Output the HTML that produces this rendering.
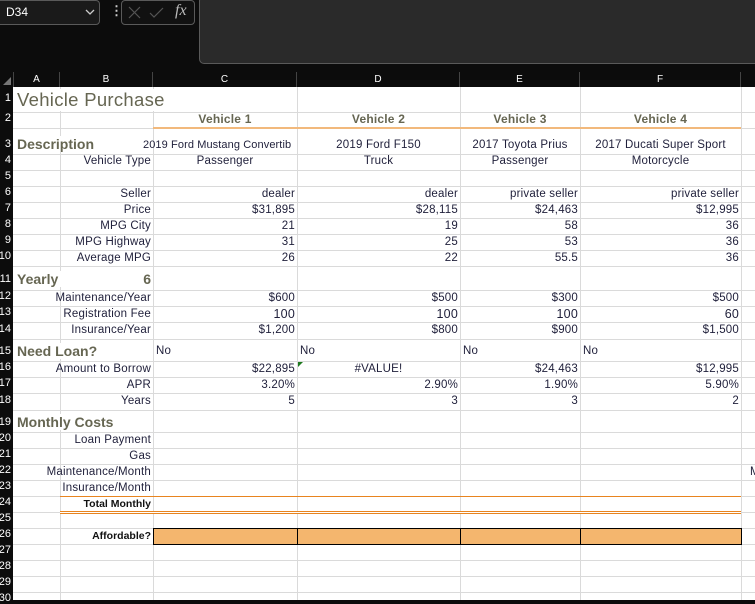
<!DOCTYPE html>
<html><head><meta charset="utf-8"><style>
*{margin:0;padding:0;box-sizing:border-box}
body{width:755px;height:600px;overflow:hidden;background:#0c0c0c;position:relative;font-family:"Liberation Sans",sans-serif}
.a{position:absolute}
.g{position:absolute;background:#dadada}
.t{position:absolute;font-size:11.5px;letter-spacing:0.2px;white-space:nowrap;color:#1f1f3a;height:16px;line-height:16px}
.r{text-align:right}
.c{text-align:center}
.h{font-weight:bold;font-size:14px;letter-spacing:0;color:#666652;background:#fff}
.rh{position:absolute;left:0;width:11px;overflow:hidden;color:#fff;font-size:11px;text-align:right;direction:rtl;white-space:nowrap}
.ch{position:absolute;top:72px;height:15px;line-height:15px;color:#fff;font-size:10px;text-align:center;border-right:1px solid #444}
</style></head><body>
<div class="a" style="left:-4px;top:0;width:104px;height:25px;border:1px solid #5a5a5a;border-radius:4px;background:#1a1a1a"></div>
<div class="a" style="left:6px;top:5px;color:#fff;font-size:12px">D34</div>
<svg class="a" style="left:85px;top:9px" width="10" height="7"><path d="M1 1 L5 5 L9 1" stroke="#ccc" stroke-width="1.3" fill="none"/></svg>
<div class="a" style="left:110px;top:3px;color:#ccc;font-size:13px;font-weight:bold">&#8942;</div>
<div class="a" style="left:121px;top:0;width:74px;height:25px;border:1px solid #5a5a5a;border-radius:4px;background:#111"></div>
<svg class="a" style="left:128px;top:6px" width="60" height="14"><path d="M1 1 L12 12 M12 1 L1 12" stroke="#555" stroke-width="1.2"/><path d="M22 7 L26 11 L35 2" stroke="#555" stroke-width="1.2" fill="none"/></svg>
<div class="a" style="left:175px;top:2px;color:#bbb;font-size:16px;font-style:italic;font-family:'Liberation Serif',serif">fx</div>
<div class="a" style="left:199px;top:-4px;width:570px;height:68px;border:1px solid #5a5a5a;border-radius:5px;background:#2a2a2a"></div>
<div class="a" style="left:0;top:72px;width:755px;height:15px;background:#0c0c0c"></div>
<div class="a" style="left:3px;top:77px;width:0;height:0;border-left:8px solid transparent;border-bottom:8px solid #777"></div>
<div class="ch" style="left:13px;width:47px;border-left:1px solid #444">A</div>
<div class="ch" style="left:60px;width:93px">B</div>
<div class="ch" style="left:153px;width:144px">C</div>
<div class="ch" style="left:297px;width:163px">D</div>
<div class="ch" style="left:460px;width:120px">E</div>
<div class="ch" style="left:580px;width:161px">F</div>
<div class="ch" style="left:741px;width:30px;text-align:left;padding-left:24px">G</div>
<div class="a" style="left:13px;top:87px;width:742px;height:513px;background:#fff"></div>
<div class="g" style="left:60px;top:87px;width:1px;height:513px"></div>
<div class="g" style="left:153px;top:87px;width:1px;height:513px"></div>
<div class="g" style="left:297px;top:87px;width:1px;height:513px"></div>
<div class="g" style="left:460px;top:87px;width:1px;height:513px"></div>
<div class="g" style="left:580px;top:87px;width:1px;height:513px"></div>
<div class="g" style="left:741px;top:87px;width:1px;height:513px"></div>
<div class="g" style="left:13px;top:112px;width:742px;height:1px"></div>
<div class="g" style="left:13px;top:128px;width:742px;height:1px"></div>
<div class="g" style="left:13px;top:154px;width:742px;height:1px"></div>
<div class="g" style="left:13px;top:170px;width:742px;height:1px"></div>
<div class="g" style="left:13px;top:186px;width:742px;height:1px"></div>
<div class="g" style="left:13px;top:202px;width:742px;height:1px"></div>
<div class="g" style="left:13px;top:218px;width:742px;height:1px"></div>
<div class="g" style="left:13px;top:234px;width:742px;height:1px"></div>
<div class="g" style="left:13px;top:250px;width:742px;height:1px"></div>
<div class="g" style="left:13px;top:266px;width:742px;height:1px"></div>
<div class="g" style="left:13px;top:290px;width:742px;height:1px"></div>
<div class="g" style="left:13px;top:306px;width:742px;height:1px"></div>
<div class="g" style="left:13px;top:322px;width:742px;height:1px"></div>
<div class="g" style="left:13px;top:339px;width:742px;height:1px"></div>
<div class="g" style="left:13px;top:361px;width:742px;height:1px"></div>
<div class="g" style="left:13px;top:377px;width:742px;height:1px"></div>
<div class="g" style="left:13px;top:393px;width:742px;height:1px"></div>
<div class="g" style="left:13px;top:410px;width:742px;height:1px"></div>
<div class="g" style="left:13px;top:432px;width:742px;height:1px"></div>
<div class="g" style="left:13px;top:448px;width:742px;height:1px"></div>
<div class="g" style="left:13px;top:464px;width:742px;height:1px"></div>
<div class="g" style="left:13px;top:480px;width:742px;height:1px"></div>
<div class="g" style="left:13px;top:496px;width:742px;height:1px"></div>
<div class="g" style="left:13px;top:528px;width:742px;height:1px"></div>
<div class="g" style="left:13px;top:544px;width:742px;height:1px"></div>
<div class="g" style="left:13px;top:560px;width:742px;height:1px"></div>
<div class="g" style="left:13px;top:576px;width:742px;height:1px"></div>
<div class="g" style="left:13px;top:592px;width:742px;height:1px"></div>
<div class="g" style="left:13px;top:512px;width:47px;height:1px"></div>
<div class="g" style="left:741px;top:512px;width:14px;height:1px"></div>
<div class="rh" style="top:92px">1</div><div class="rh" style="top:112px">2</div><div class="rh" style="top:138px">3</div><div class="rh" style="top:154px">4</div><div class="rh" style="top:170px">5</div><div class="rh" style="top:186px">6</div><div class="rh" style="top:202px">7</div><div class="rh" style="top:218px">8</div><div class="rh" style="top:234px">9</div><div class="rh" style="top:250px">10</div><div class="rh" style="top:273px">11</div><div class="rh" style="top:290px">12</div><div class="rh" style="top:306px">13</div><div class="rh" style="top:323px">14</div><div class="rh" style="top:345px">15</div><div class="rh" style="top:361px">16</div><div class="rh" style="top:377px">17</div><div class="rh" style="top:394px">18</div><div class="rh" style="top:416px">19</div><div class="rh" style="top:432px">20</div><div class="rh" style="top:448px">21</div><div class="rh" style="top:464px">22</div><div class="rh" style="top:480px">23</div><div class="rh" style="top:496px">24</div><div class="rh" style="top:512px">25</div><div class="rh" style="top:528px">26</div><div class="rh" style="top:544px">27</div><div class="rh" style="top:560px">28</div><div class="rh" style="top:576px">29</div><div class="rh" style="top:592px">30</div>
<div class="t" style="left:14px;top:89px;height:22px;line-height:22px;font-size:18.5px;letter-spacing:0.3px;color:#666652;background:#fff;padding:0 3px">Vehicle Purchase</div>
<div class="t h" style="left:14px;top:136px;padding:0 3px">Description</div>
<div class="t h" style="left:14px;top:271px;padding:0 3px">Yearly</div>
<div class="t h" style="left:14px;top:343px;padding:0 3px">Need Loan?</div>
<div class="t h" style="left:14px;top:414px;padding:0 3px">Monthly Costs</div>
<div class="t r h" style="right:604px;top:271px">6</div>
<div class="t c" style="left:153px;width:144px;top:111px;font-size:12px;font-weight:bold;color:#666652">Vehicle 1</div>
<div class="t c" style="left:297px;width:163px;top:111px;font-size:12px;font-weight:bold;color:#666652">Vehicle 2</div>
<div class="t c" style="left:460px;width:120px;top:111px;font-size:12px;font-weight:bold;color:#666652">Vehicle 3</div>
<div class="t c" style="left:580px;width:161px;top:111px;font-size:12px;font-weight:bold;color:#666652">Vehicle 4</div>
<div class="a" style="left:153px;top:127px;width:588px;height:2px;background:#f2b97c"></div>
<div class="t" style="left:143px;width:154px;overflow:hidden;top:137px;font-size:11px;letter-spacing:0.1px">2019 Ford Mustang Convertib</div>
<div class="t c" style="left:297px;width:163px;top:137px">2019 Ford F150</div>
<div class="t c" style="left:460px;width:120px;top:137px">2017 Toyota Prius</div>
<div class="t c" style="left:580px;width:161px;top:137px">2017 Ducati Super Sport</div>
<div class="t r" style="right:604px;top:153px">Vehicle Type</div>
<div class="t c" style="left:153px;width:144px;top:153px">Passenger</div>
<div class="t c" style="left:297px;width:163px;top:153px">Truck</div>
<div class="t c" style="left:460px;width:120px;top:153px">Passenger</div>
<div class="t c" style="left:580px;width:161px;top:153px">Motorcycle</div>
<div class="t r" style="right:604px;top:186px">Seller</div>
<div class="t r" style="right:604px;top:202px">Price</div>
<div class="t r" style="right:604px;top:218px">MPG City</div>
<div class="t r" style="right:604px;top:234px">MPG Highway</div>
<div class="t r" style="right:604px;top:250px">Average MPG</div>
<div class="t r" style="right:604px;top:290px">Maintenance/Year</div>
<div class="t r" style="right:604px;top:306px">Registration Fee</div>
<div class="t r" style="right:604px;top:322px">Insurance/Year</div>
<div class="t r" style="right:604px;top:361px">Amount to Borrow</div>
<div class="t r" style="right:604px;top:377px">APR</div>
<div class="t r" style="right:604px;top:393px">Years</div>
<div class="t r" style="right:604px;top:432px">Loan Payment</div>
<div class="t r" style="right:604px;top:448px">Gas</div>
<div class="t r" style="right:604px;top:464px">Maintenance/Month</div>
<div class="t r" style="right:604px;top:480px">Insurance/Month</div>
<div class="t r" style="right:604px;top:496px;font-weight:bold;font-size:10.5px;letter-spacing:0;color:#111">Total Monthly</div>
<div class="t r" style="right:604px;top:528px;font-weight:bold;font-size:10.5px;letter-spacing:0;color:#111">Affordable?</div>
<div class="t r" style="right:460px;top:186px">dealer</div>
<div class="t r" style="right:460px;top:202px">$31,895</div>
<div class="t r" style="right:460px;top:218px">21</div>
<div class="t r" style="right:460px;top:234px">31</div>
<div class="t r" style="right:460px;top:250px">26</div>
<div class="t r" style="right:460px;top:290px">$600</div>
<div class="t r" style="right:460px;top:306px;font-size:12.5px">100</div>
<div class="t r" style="right:460px;top:322px">$1,200</div>
<div class="t" style="left:156px;top:343px">No</div>
<div class="t r" style="right:460px;top:361px">$22,895</div>
<div class="t r" style="right:460px;top:377px">3.20%</div>
<div class="t r" style="right:460px;top:393px">5</div>
<div class="a" style="left:298px;top:362px;width:0;height:0;border-top:5px solid #1e7a1e;border-right:5px solid transparent"></div>
<div class="t r" style="right:297px;top:186px">dealer</div>
<div class="t r" style="right:297px;top:202px">$28,115</div>
<div class="t r" style="right:297px;top:218px">19</div>
<div class="t r" style="right:297px;top:234px">25</div>
<div class="t r" style="right:297px;top:250px">22</div>
<div class="t r" style="right:297px;top:290px">$500</div>
<div class="t r" style="right:297px;top:306px;font-size:12.5px">100</div>
<div class="t r" style="right:297px;top:322px">$800</div>
<div class="t" style="left:300px;top:343px">No</div>
<div class="t c" style="left:297px;width:163px;top:361px">#VALUE!</div>
<div class="t r" style="right:297px;top:377px">2.90%</div>
<div class="t r" style="right:297px;top:393px">3</div>
<div class="t r" style="right:177px;top:186px">private seller</div>
<div class="t r" style="right:177px;top:202px">$24,463</div>
<div class="t r" style="right:177px;top:218px">58</div>
<div class="t r" style="right:177px;top:234px">53</div>
<div class="t r" style="right:177px;top:250px">55.5</div>
<div class="t r" style="right:177px;top:290px">$300</div>
<div class="t r" style="right:177px;top:306px;font-size:12.5px">100</div>
<div class="t r" style="right:177px;top:322px">$900</div>
<div class="t" style="left:463px;top:343px">No</div>
<div class="t r" style="right:177px;top:361px">$24,463</div>
<div class="t r" style="right:177px;top:377px">1.90%</div>
<div class="t r" style="right:177px;top:393px">3</div>
<div class="t r" style="right:16px;top:186px">private seller</div>
<div class="t r" style="right:16px;top:202px">$12,995</div>
<div class="t r" style="right:16px;top:218px">36</div>
<div class="t r" style="right:16px;top:234px">36</div>
<div class="t r" style="right:16px;top:250px">36</div>
<div class="t r" style="right:16px;top:290px">$500</div>
<div class="t r" style="right:16px;top:306px;font-size:12.5px">60</div>
<div class="t r" style="right:16px;top:322px">$1,500</div>
<div class="t" style="left:583px;top:343px">No</div>
<div class="t r" style="right:16px;top:361px">$12,995</div>
<div class="t r" style="right:16px;top:377px">5.90%</div>
<div class="t r" style="right:16px;top:393px">2</div>
<div class="t" style="left:750px;top:464px">M</div>
<div class="a" style="left:60px;top:496px;width:681px;height:1px;background:#e8841f;z-index:5"></div>
<div class="a" style="left:60px;top:511px;width:681px;height:3px;border-top:1px solid #e8841f;border-bottom:1px solid #e8841f;background:#fff;z-index:5"></div>
<div class="a" style="left:153px;top:528px;width:589px;height:17px;background:#f4b66e;border:1px solid #000"></div>
<div class="a" style="left:297px;top:528px;width:1px;height:17px;background:#000"></div>
<div class="a" style="left:460px;top:528px;width:1px;height:17px;background:#000"></div>
<div class="a" style="left:580px;top:528px;width:1px;height:17px;background:#000"></div>
</body></html>
